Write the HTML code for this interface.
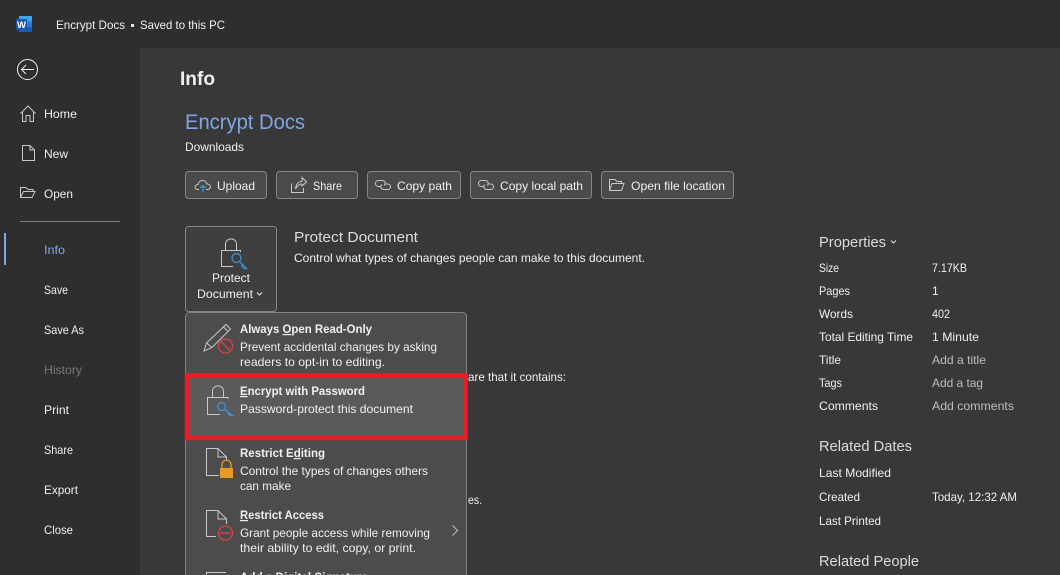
<!DOCTYPE html>
<html lang="en">
<head>
<meta charset="utf-8">
<title>Info</title>
<style>
html,body{margin:0;padding:0;background:#2e2e2e;width:1060px;height:575px;overflow:hidden}
svg{display:block}
text{font-family:"Liberation Sans",sans-serif;font-size:12px;fill:#f0f0f0}
.b{font-weight:bold}
.h{font-size:15px;fill:#dcdcdc}
.m{fill:#bdbdbd}
.ic{fill:none;stroke:#c8c8c8;stroke-width:1}
.btn{fill:#4a4a4a;stroke:#858585;stroke-width:1}
</style>
</head>
<body>
<svg xmlns="http://www.w3.org/2000/svg" width="1060" height="575" viewBox="0 0 1060 575">
<rect width="1060" height="575" fill="#2e2e2e"/>
<rect x="140" y="48" width="920" height="527" fill="#383838"/>

<!-- Word logo -->
<rect x="19" y="16" width="13" height="5.500" fill="#41a5ee"/>
<rect x="19" y="21.500" width="13" height="5.500" fill="#2b7cd3"/>
<rect x="19" y="27" width="13" height="5" fill="#185abd"/>
<rect x="16" y="19" width="11" height="11" rx="1" fill="#1a55b0"/>
<text x="17" y="28" class="b" style="font-size:9.500px;fill:#fff" textLength="9" lengthAdjust="spacingAndGlyphs">W</text>

<text x="56" y="29" textLength="69" lengthAdjust="spacingAndGlyphs">Encrypt Docs</text>
<rect x="131" y="24" width="3" height="3" fill="#e8e8e8"/>
<text x="140" y="29" textLength="85" lengthAdjust="spacingAndGlyphs">Saved to this PC</text>

<!-- Back -->
<circle cx="27.500" cy="69.500" r="10" fill="none" stroke="#f0f0f0" stroke-width="1"/>
<path d="M21.500 69.500H34M26 65L21.500 69.500L26 74" fill="none" stroke="#f0f0f0" stroke-width="1"/>

<!-- Sidebar icons -->
<path class="ic" d="M20.500 113.500L28 106L35.500 113.500M22.500 112V121.500H26V115.500H30V121.500H33.500V112"/>
<path class="ic" d="M22.500 145.500H30L34.500 150V160.500H22.500ZM30 145.500V150H34.500"/>
<path class="ic" d="M20.500 197.500V187.500H26L28 189.500H33V191.500M20.500 197.500L23.500 191.500H35L32 197.500Z"/>

<!-- Sidebar text -->
<text x="44" y="118" textLength="33" lengthAdjust="spacingAndGlyphs">Home</text>
<text x="44" y="158" textLength="24" lengthAdjust="spacingAndGlyphs">New</text>
<text x="44" y="198" textLength="29" lengthAdjust="spacingAndGlyphs">Open</text>
<rect x="20" y="221" width="100" height="1" fill="#7d7d7d"/>
<rect x="4" y="233" width="2" height="32" fill="#7fa5e3"/>
<text x="44" y="254" textLength="21" lengthAdjust="spacingAndGlyphs" style="fill:#7fa5e3">Info</text>
<text x="44" y="294" textLength="24" lengthAdjust="spacingAndGlyphs">Save</text>
<text x="44" y="334" textLength="40" lengthAdjust="spacingAndGlyphs">Save As</text>
<text x="44" y="374" textLength="38" lengthAdjust="spacingAndGlyphs" style="fill:#777">History</text>
<text x="44" y="414" textLength="25" lengthAdjust="spacingAndGlyphs">Print</text>
<text x="44" y="454" textLength="29" lengthAdjust="spacingAndGlyphs">Share</text>
<text x="44" y="494" textLength="34" lengthAdjust="spacingAndGlyphs">Export</text>
<text x="44" y="534" textLength="29" lengthAdjust="spacingAndGlyphs">Close</text>

<!-- Header -->
<text x="180" y="85" class="b" style="font-size:19px" textLength="35" lengthAdjust="spacingAndGlyphs">Info</text>
<text x="185" y="129" style="font-size:21px;fill:#7fa5e3" textLength="120" lengthAdjust="spacingAndGlyphs">Encrypt Docs</text>
<text x="185" y="151" textLength="59" lengthAdjust="spacingAndGlyphs">Downloads</text>

<!-- Buttons -->
<rect class="btn" x="185.500" y="171.500" width="81" height="27" rx="3"/>
<rect class="btn" x="276.500" y="171.500" width="81" height="27" rx="3"/>
<rect class="btn" x="367.500" y="171.500" width="93" height="27" rx="3"/>
<rect class="btn" x="470.500" y="171.500" width="121" height="27" rx="3"/>
<rect class="btn" x="601.500" y="171.500" width="132" height="27" rx="3"/>
<text x="217" y="190" textLength="38" lengthAdjust="spacingAndGlyphs">Upload</text>
<text x="313" y="190" textLength="29" lengthAdjust="spacingAndGlyphs">Share</text>
<text x="397" y="190" textLength="55" lengthAdjust="spacingAndGlyphs">Copy path</text>
<text x="500" y="190" textLength="83" lengthAdjust="spacingAndGlyphs">Copy local path</text>
<text x="631" y="190" textLength="94" lengthAdjust="spacingAndGlyphs">Open file location</text>

<!-- Upload icon -->
<path class="ic" d="M199 189.500H198C194 189.500 194 184.500 198 184.500C199 179 206 179.500 207 184C211.500 184 211.500 189.500 207.500 189.500H206"/>
<path d="M203 192.500V185.500M200 188L203 185.500L206 188" fill="none" stroke="#41a5ee" stroke-width="1"/>
<!-- Share icon -->
<path class="ic" d="M291.500 183.500V192.500H303.500V188M295.500 189C296 183.500 299 181.500 302 181.500V177.500L306.500 182L302 186V184C299 184 297 186 295.500 189Z"/>
<!-- Link icons -->
<path class="ic" d="M381 186.500H378.500C374.500 186.500 374.500 180.500 378.500 180.500H382C385.500 180.500 386 184 384 185.500M385 184H387.500C391.500 184 391.500 189.500 387.500 189.500H384C380.500 189.500 380 186 382 184.500"/>
<path class="ic" d="M484 186.500H481.500C477.500 186.500 477.500 180.500 481.500 180.500H485C488.500 180.500 489 184 487 185.500M488 184H490.500C494.500 184 494.500 189.500 490.500 189.500H487C483.500 189.500 483 186 485 184.500"/>
<!-- Folder -->
<path class="ic" d="M609.500 190.500V179.500H615L617 181.500H621.500V183.500M609.500 190.500L612 183.500H624L621.500 190.500Z"/>

<!-- Protect Document button -->
<rect x="185.500" y="226.500" width="91" height="85" rx="3" fill="#3f3f3f" stroke="#858585"/>
<path class="ic" d="M225.500 250V244.500C225.500 237 236.500 237 236.500 244.500V250"/>
<path class="ic" d="M233 266.500H221.500V250.500H240.500V252"/>
<circle cx="236.500" cy="258" r="4.500" fill="#3f3f3f" stroke="#3a96dd" stroke-width="1.200"/>
<path d="M239.500 261.500L246.500 268.500L244 268.500L242 266.500V264.500" fill="none" stroke="#3a96dd" stroke-width="1.200"/>
<text x="212" y="282" textLength="38" lengthAdjust="spacingAndGlyphs">Protect</text>
<text x="197" y="298" textLength="56" lengthAdjust="spacingAndGlyphs">Document</text>
<path d="M257 292.500L259.500 295L262 292.500" fill="none" stroke="#e8e8e8" stroke-width="1"/>

<!-- Protect heading -->
<text x="294" y="242" class="h" textLength="124" lengthAdjust="spacingAndGlyphs">Protect Document</text>
<text x="294" y="262" textLength="351" lengthAdjust="spacingAndGlyphs">Control what types of changes people can make to this document.</text>
<text x="468" y="381" textLength="98" lengthAdjust="spacingAndGlyphs">are that it contains:</text>
<text x="468" y="504" textLength="14" lengthAdjust="spacingAndGlyphs">es.</text>

<!-- Menu -->
<rect x="185.500" y="312.500" width="281" height="280" rx="4" fill="#4c4c4c" stroke="#808080"/>
<rect x="187" y="375.500" width="278.500" height="62.500" fill="#5a5a5a" stroke="#ed1c24" stroke-width="4.500"/>

<!-- Menu icons -->
<path class="ic" d="M204 351L206.500 343L226 324.500L230.500 329L212 347.500ZM206.500 343L212 347.500M223.500 327L228 331.500"/>
<circle cx="225.500" cy="346" r="7" fill="#4c4c4c" stroke="#d9414b" stroke-width="1.300"/>
<path d="M220.500 341L230.500 351" stroke="#d9414b" stroke-width="1.300"/>

<path class="ic" d="M212.500 397V391.500C212.500 384 223.500 384 223.500 391.500V397"/>
<path class="ic" d="M220 414.500H207.500V397.500H228V399"/>
<circle cx="221.500" cy="406.500" r="4" fill="#5a5a5a" stroke="#3a96dd" stroke-width="1.200"/>
<path d="M224.500 409.500L232.500 415.500L230 415.500L228 413.500V412" fill="none" stroke="#3a96dd" stroke-width="1.200"/>

<path class="ic" d="M219 475.500H206.500V448.500H218L226.500 457V461M218 448.500V457H226.500"/>
<path d="M222 469V465C222 458.500 231 458.500 231 465V469" fill="none" stroke="#e89a28" stroke-width="1.300"/>
<rect x="220" y="468" width="13" height="10" fill="#e89a28"/>

<path class="ic" d="M216 536.500H206.500V510.500H218L226.500 519V524M218 510.500V519H226.500"/>
<circle cx="225.500" cy="533" r="7" fill="#4c4c4c" stroke="#d9414b" stroke-width="1.300"/>
<path d="M220.500 533H230.500" stroke="#d9414b" stroke-width="1.300"/>
<path class="ic" d="M206.500 575V572.500H226"/>

<!-- Menu text -->
<text x="240" y="333" class="b" textLength="132" lengthAdjust="spacingAndGlyphs">Always <tspan text-decoration="underline">O</tspan>pen Read-Only</text>
<text x="240" y="351" textLength="197" lengthAdjust="spacingAndGlyphs">Prevent accidental changes by asking</text>
<text x="240" y="366" textLength="145" lengthAdjust="spacingAndGlyphs">readers to opt-in to editing.</text>
<text x="240" y="395" class="b" textLength="125" lengthAdjust="spacingAndGlyphs"><tspan text-decoration="underline">E</tspan>ncrypt with Password</text>
<text x="240" y="413" textLength="173" lengthAdjust="spacingAndGlyphs">Password-protect this document</text>
<text x="240" y="457" class="b" textLength="85" lengthAdjust="spacingAndGlyphs">Restrict E<tspan text-decoration="underline">d</tspan>iting</text>
<text x="240" y="475" textLength="188" lengthAdjust="spacingAndGlyphs">Control the types of changes others</text>
<text x="240" y="490" textLength="51" lengthAdjust="spacingAndGlyphs">can make</text>
<text x="240" y="519" class="b" textLength="84" lengthAdjust="spacingAndGlyphs"><tspan text-decoration="underline">R</tspan>estrict Access</text>
<text x="240" y="537" textLength="190" lengthAdjust="spacingAndGlyphs">Grant people access while removing</text>
<text x="240" y="552" textLength="176" lengthAdjust="spacingAndGlyphs">their ability to edit, copy, or print.</text>
<text x="240" y="581" class="b" textLength="128" lengthAdjust="spacingAndGlyphs">Add a Digital Signature</text>
<path d="M452.500 525.500L457.500 530.500L452.500 535.500" fill="none" stroke="#c0c0c0" stroke-width="1"/>

<!-- Properties -->
<text x="819" y="247" class="h" textLength="67" lengthAdjust="spacingAndGlyphs">Properties</text>
<path d="M891 240.500L893.500 243L896 240.500" fill="none" stroke="#e0e0e0" stroke-width="1"/>
<text x="819" y="272" textLength="20" lengthAdjust="spacingAndGlyphs">Size</text><text x="932" y="272" textLength="35" lengthAdjust="spacingAndGlyphs">7.17KB</text>
<text x="819" y="295" textLength="31" lengthAdjust="spacingAndGlyphs">Pages</text><text x="932" y="295">1</text>
<text x="819" y="318" textLength="34" lengthAdjust="spacingAndGlyphs">Words</text><text x="932" y="318" textLength="18" lengthAdjust="spacingAndGlyphs">402</text>
<text x="819" y="341" textLength="94" lengthAdjust="spacingAndGlyphs">Total Editing Time</text><text x="932" y="341" textLength="47" lengthAdjust="spacingAndGlyphs">1 Minute</text>
<text x="819" y="364" textLength="22" lengthAdjust="spacingAndGlyphs">Title</text><text x="932" y="364" class="m" textLength="54" lengthAdjust="spacingAndGlyphs">Add a title</text>
<text x="819" y="387" textLength="23" lengthAdjust="spacingAndGlyphs">Tags</text><text x="932" y="387" class="m" textLength="51" lengthAdjust="spacingAndGlyphs">Add a tag</text>
<text x="819" y="410" textLength="59" lengthAdjust="spacingAndGlyphs">Comments</text><text x="932" y="410" class="m" textLength="82" lengthAdjust="spacingAndGlyphs">Add comments</text>

<text x="819" y="451" class="h" textLength="93" lengthAdjust="spacingAndGlyphs">Related Dates</text>
<text x="819" y="477" textLength="72" lengthAdjust="spacingAndGlyphs">Last Modified</text>
<text x="819" y="501" textLength="41" lengthAdjust="spacingAndGlyphs">Created</text><text x="932" y="501" textLength="85" lengthAdjust="spacingAndGlyphs">Today, 12:32 AM</text>
<text x="819" y="525" textLength="62" lengthAdjust="spacingAndGlyphs">Last Printed</text>
<text x="819" y="566" class="h" textLength="100" lengthAdjust="spacingAndGlyphs">Related People</text>
</svg>
</body>
</html>
